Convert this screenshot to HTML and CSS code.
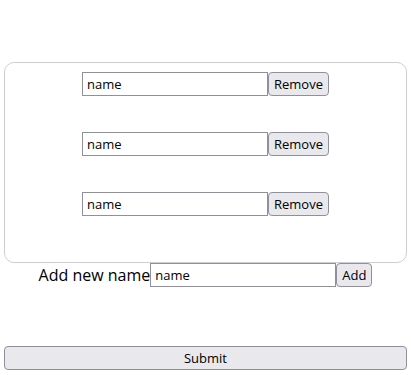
FILE: index.html
```html
<!DOCTYPE html>
<html>
<head>
    <title>Names</title>
    <link rel="stylesheet" href="styles.css">
</head>
<body>
    <form class="names-form">
        <div class="names-list">
            <div class="name-row">
                <input type="text" class="name-input" value="name">
                <button type="button" class="btn">Remove</button>
            </div>
            <div class="name-row">
                <input type="text" class="name-input" value="name">
                <button type="button" class="btn">Remove</button>
            </div>
            <div class="name-row">
                <input type="text" class="name-input" value="name">
                <button type="button" class="btn">Remove</button>
            </div>
        </div>
        <div class="add-row">
            <label for="new-name" class="add-label">Add new name</label>
            <input type="text" id="new-name" class="name-input" value="name">
            <button type="button" class="btn">Add</button>
        </div>
        <button type="submit" class="btn submit-btn">Submit</button>
    </form>
</body>
</html>
```

FILE: styles.css
```css
body {
    margin: 0;
    padding: 62px 4px 0;
    font-family: "Open Sans", "Noto Sans", sans-serif;
}

.names-list {
    padding: 9px 0;
    border: 1px solid #cfcfd3;
    border-radius: 10px;
    height: 201px;
    box-sizing: border-box;
}

.name-row {
    display: flex;
    justify-content: center;
    margin-bottom: 36px;
}

.name-input {
    width: 186px;
    height: 24px;
    box-sizing: border-box;
    margin: 0;
    padding: 1px 4px;
    border: 1px solid #8f8f9d;
    border-radius: 0;
    font-family: inherit;
    font-size: 13px;
    color: #000;
}

.btn {
    height: 24px;
    margin: 0;
    padding: 0 5px;
    background-color: #e9e9ed;
    border: 1px solid #8f8f9d;
    border-radius: 4px;
    font-family: inherit;
    font-size: 13px;
    color: #000;
}

.add-row {
    display: flex;
    justify-content: center;
    align-items: flex-end;
}

.add-label {
    font-size: 16px;
    line-height: 20px;
    padding-bottom: 2px;
}

.submit-btn {
    display: block;
    width: 100%;
    margin-top: 59px;
}
```
